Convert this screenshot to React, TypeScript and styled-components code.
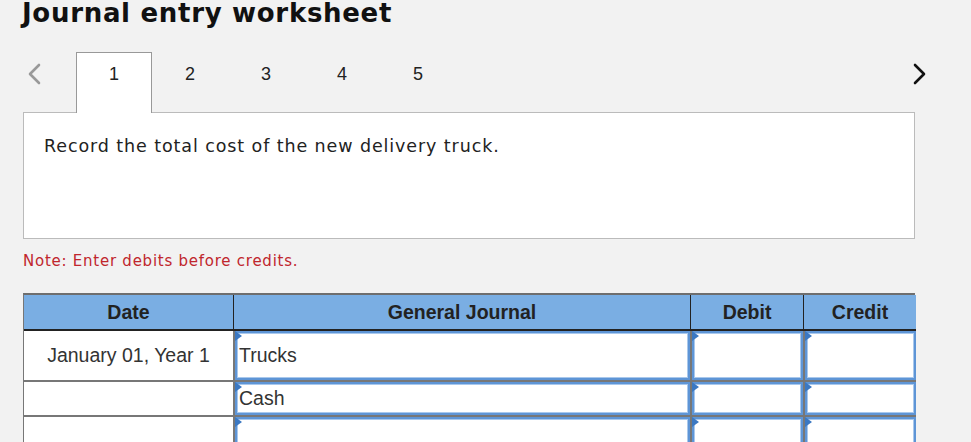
import React from 'react';
import styled, { createGlobalStyle } from 'styled-components';

const GlobalStyle = createGlobalStyle`
  html, body {
    margin: 0;
    padding: 0;
    background: #f2f2f2;
  }
`;

const Page = styled.div`
  width: 971px;
  height: 442px;
  overflow: hidden;
  padding: 0 56px 0 23px;
  box-sizing: border-box;
`;

const Title = styled.h1`
  margin: -2px 0 0 -1px;
  font-family: 'DejaVu Sans', Verdana, sans-serif;
  font-weight: bold;
  font-size: 26px;
  letter-spacing: 0.7px;
  line-height: 30px;
  color: #111;
`;

const TabBar = styled.div`
  display: flex;
  align-items: stretch;
  height: 60px;
  margin-top: 24px;
  position: relative;
  z-index: 1;
`;

const Arrow = styled.button<{ $dim?: boolean }>`
  border: 0;
  background: none;
  padding: 0 0 0 3px;
  width: 53px;
  height: 44px;
  display: flex;
  align-items: center;
  justify-content: flex-start;
  color: ${(p) => (p.$dim ? '#999' : '#111')};
  cursor: pointer;
`;

const NextArrow = styled(Arrow)`
  margin-left: auto;
  width: 24px;
  padding: 0;
  margin-right: -21px;
`;

const Tab = styled.div<{ $active?: boolean }>`
  width: 76px;
  box-sizing: border-box;
  padding-top: 10px;
  text-align: center;
  font-family: 'Liberation Sans', Arial, sans-serif;
  font-size: 18px;
  line-height: 22px;
  color: #222;
  background: ${(p) => (p.$active ? '#fff' : 'transparent')};
  border: 1px solid ${(p) => (p.$active ? '#999' : 'transparent')};
  border-bottom: 0;
  margin-bottom: ${(p) => (p.$active ? '-1px' : '0')};
`;

const Prompt = styled.div`
  height: 127px;
  box-sizing: border-box;
  background: #fff;
  border: 1px solid #bbb;
  padding: 21px 20px;
  font-family: 'DejaVu Sans', Verdana, sans-serif;
  font-size: 17.5px;
  letter-spacing: 0.9px;
  line-height: 24px;
  color: #222;
`;

const Note = styled.p`
  margin: 12px 0 0;
  font-family: 'DejaVu Sans', Verdana, sans-serif;
  font-size: 15px;
  letter-spacing: 0.75px;
  line-height: 20px;
  color: #c0262d;
`;

const Table = styled.div`
  display: grid;
  grid-template-columns: 209px 457px 113px 113px;
  margin-top: 22px;
  border-left: 1px solid #777;
  border-right: 1px solid #777;
  border-top: 2px solid #6e6e6e;
  background: #fff;
`;

const HeadCell = styled.div<{ $first?: boolean }>`
  height: 34px;
  background: #7aaee3;
  border-bottom: 2px solid #222;
  border-left: ${(p) => (p.$first ? '0' : '1px solid #222')};
  display: flex;
  align-items: center;
  justify-content: center;
  font-family: 'Liberation Sans', Arial, sans-serif;
  font-weight: bold;
  font-size: 19.5px;
  color: #222;
`;

const DateCell = styled.div<{ $h: number }>`
  height: ${(p) => p.$h}px;
  border-bottom: 2px solid #777;
  display: flex;
  align-items: center;
  justify-content: center;
  font-family: 'Liberation Sans', Arial, sans-serif;
  font-size: 19.5px;
  color: #333;
`;

const EntryCell = styled.div<{ $h: number }>`
  height: ${(p) => p.$h}px;
  border-left: 2px solid #777;
  border-bottom: 2px solid #777;
  display: flex;
`;

const Input = styled.div`
  position: relative;
  flex: 1;
  border: 2px solid #5e95d6;
  box-shadow: inset 0 0 0 1px #a9c8ec;
  background: #fff;
  display: flex;
  align-items: center;
  padding-left: 2px;
  font-family: 'Liberation Sans', Arial, sans-serif;
  font-size: 19.5px;
  color: #333;

  &::before {
    content: '';
    position: absolute;
    left: -2px;
    top: -2px;
    border-top: 5px solid transparent;
    border-bottom: 5px solid transparent;
    border-left: 7px solid #3b78c2;
  }
`;

const Chevron = ({ dir }: { dir: 'left' | 'right' }) => (
  <svg width="16" height="24" viewBox="0 0 16 24" fill="none">
    <path
      d={dir === 'left' ? 'M13 3 L4 12 L13 21' : 'M3 3 L12 12 L3 21'}
      stroke="currentColor"
      strokeWidth="2.6"
      strokeLinecap="round"
      strokeLinejoin="round"
    />
  </svg>
);

const rows = [
  { date: 'January 01, Year 1', account: 'Trucks', h: 49 },
  { date: '', account: 'Cash', h: 33 },
  { date: '', account: '', h: 40 },
];

export default function App() {
  return (
    <>
      <GlobalStyle />
      <Page>
        <Title>Journal entry worksheet</Title>
        <TabBar>
          <Arrow $dim>
            <Chevron dir="left" />
          </Arrow>
          {[1, 2, 3, 4, 5].map((n) => (
            <Tab key={n} $active={n === 1}>
              {n}
            </Tab>
          ))}
          <NextArrow>
            <Chevron dir="right" />
          </NextArrow>
        </TabBar>
        <Prompt>Record the total cost of the new delivery truck.</Prompt>
        <Note>Note: Enter debits before credits.</Note>
        <Table>
          <HeadCell $first>Date</HeadCell>
          <HeadCell>General Journal</HeadCell>
          <HeadCell>Debit</HeadCell>
          <HeadCell>Credit</HeadCell>
          {rows.map((r, i) => (
            <React.Fragment key={i}>
              <DateCell $h={r.h}>{r.date}</DateCell>
              <EntryCell $h={r.h}>
                <Input>{r.account}</Input>
              </EntryCell>
              <EntryCell $h={r.h}>
                <Input />
              </EntryCell>
              <EntryCell $h={r.h}>
                <Input />
              </EntryCell>
            </React.Fragment>
          ))}
        </Table>
      </Page>
    </>
  );
}
